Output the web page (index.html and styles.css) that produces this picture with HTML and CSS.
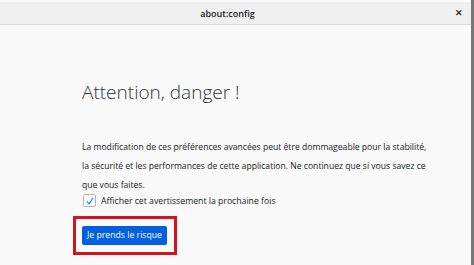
FILE: index.html
```html
<!DOCTYPE html>
<html lang="fr">
<head>
<meta charset="utf-8">
<title>about:config</title>
<link rel="stylesheet" href="styles.css">
</head>
<body>
<div class="window">
  <div class="titlebar">
    <span class="title">about:config</span>
    <span class="close">&#x2715;</span>
  </div>
  <main class="content">
    <h1 class="heading">Attention, danger !</h1>
    <p class="text">La modification de ces préférences avancées peut être dommageable pour la stabilité,<br>la sécurité et les performances de cette application. Ne continuez que si vous savez ce<br>que vous faites.</p>
    <label class="check">
      <span class="box"><svg width="10" height="10" viewBox="0 0 10 10"><path d="M2 5.5 L4.2 7.8 L8 2" fill="none" stroke="#0a84ff" stroke-width="1.2"/></svg></span>
      <span>Afficher cet avertissement la prochaine fois</span>
    </label>
    <div class="highlight">
      <button class="btn">Je prends le risque</button>
    </div>
  </main>
  <div class="edge"></div>
</div>
</body>
</html>
```
FILE: styles.css
```css
html, body {
  margin: 0;
  padding: 0;
  width: 474px;
  height: 265px;
  overflow: hidden;
  background: #f9f9fa;
  font-family: "Open Sans", "Noto Sans", sans-serif;
}
.window {
  position: relative;
  width: 474px;
  height: 265px;
  display: flex;
  flex-direction: column;
  background: #f9f9fa;
}
.titlebar {
  margin-top: 2px;
  height: 22px;
  background: #efefef;
  border-bottom: 1px solid #dcdcdc;
  display: flex;
  align-items: center;
  justify-content: center;
  position: relative;
  color: #222;
  font-family: "Open Sans", sans-serif;
  font-size: 9px;
  font-weight: 600;
  margin-right: 3px;
  padding-right: 16px;
}
.close {
  position: absolute;
  right: 8px;
  top: 4px;
  font-size: 9px;
  font-weight: 700;
  color: #333;
}
.content {
  padding: 0 0 0 82px;
  margin-right: 3px;
  flex: 1;
}
.heading {
  margin: 53px 0 0 0;
  font-size: 19px;
  font-weight: 300;
  color: #333;
  line-height: 28px;
}
.text {
  margin: 32px 0 0 0;
  font-size: 8.6px;
  line-height: 19px;
  color: #222;
  white-space: nowrap;
}
.check {
  margin-top: -1px;
  display: flex;
  align-items: center;
  gap: 5px;
  font-size: 8.7px;
  color: #222;
  padding-left: 1px;
}
.box {
  width: 11px;
  height: 11px;
  border: 1px solid #b5b5b5;
  border-radius: 2px;
  background: #fff;
  display: flex;
  align-items: center;
  justify-content: center;
}
.highlight {
  margin: 9px 0 0 -9px;
  border: 3px solid #d3141f;
  padding: 7px 0 0 6px;
  box-sizing: border-box;
  width: 104px;
  height: 39px;
}
.btn {
  display: block;
  background: #0060df;
  color: #fff;
  border: none;
  border-radius: 2px;
  height: 19px;
  padding: 0 5px;
  font-family: "Open Sans", sans-serif;
  font-size: 8.7px;
  line-height: 19px;
  white-space: nowrap;
}
.edge {
  position: absolute;
  right: 0;
  top: 0;
  width: 3px;
  height: 265px;
  background: #777;
}
```
